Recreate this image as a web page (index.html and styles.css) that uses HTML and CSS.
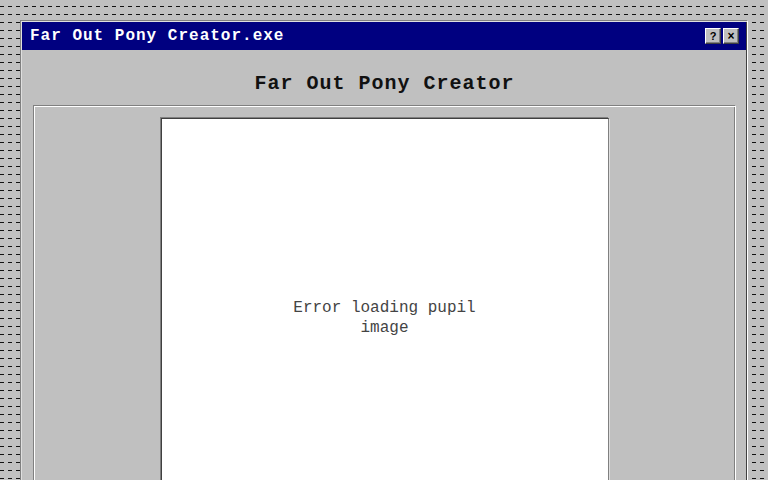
FILE: index.html
```html
<!DOCTYPE html>
<html lang="en">
<head>
    <meta charset="UTF-8">
    <meta name="viewport" content="width=device-width, initial-scale=1.0">
    <title>Far Out Pony Creator</title>
    <link rel="stylesheet" href="styles.css">
</head>
<body>
    <div class="window">
        <!-- Title bar -->
        <div class="title-bar">
            <span class="title-text">Far Out Pony Creator.exe</span>
            <div class="title-buttons">
                <button class="title-btn">?</button>
                <button class="title-btn close">&times;</button>
            </div>
        </div>

        <div class="window-body">
            <h1 class="app-heading">Far Out Pony Creator</h1>

            <div class="panel">
                <div class="pupil-frame">
                    <p class="pupil-error">Error loading pupil image</p>
                </div>
            </div>
        </div>
    </div>
</body>
</html>
```

FILE: styles.css
```css
/* General Styles */
html {
    overflow: hidden;
}

body {
    margin: 0;
    padding: 20px 20px 0;
    font-family: 'Courier New', 'Liberation Mono', monospace;
    background-color: #c0c0c0;
    background-image:
        linear-gradient(to right, transparent 4px, #c0c0c0 4px),
        linear-gradient(to bottom, #c0c0c0 6px, #111 6px, #111 7px, #c0c0c0 7px);
    background-size: 8px 8px;
}

/* Window */
.window {
    width: 728px;
    box-sizing: border-box;
    background: #c0c0c0;
    border: 1px solid;
    border-color: #808080 #fff #fff #808080;
    box-shadow: inset 1px 1px #dfdfdf, inset -1px -1px #404040;
    padding: 1px;
}

.title-bar {
    height: 28px;
    background: #000080;
    display: flex;
    align-items: center;
    justify-content: space-between;
    padding: 0 7px 0 8px;
}

.title-text {
    color: #fff;
    font-weight: bold;
    font-size: 16px;
    letter-spacing: 1px;
}

.title-buttons {
    display: flex;
    gap: 2px;
}

.title-btn {
    width: 16px;
    height: 16px;
    padding: 0;
    background: #c0c0c0;
    border: 1px solid;
    border-color: #fff #404040 #404040 #fff;
    box-shadow: inset -1px -1px #808080;
    font-family: 'Liberation Sans', Arial, sans-serif;
    font-size: 11px;
    font-weight: bold;
    line-height: 13px;
    color: #000;
}

.title-btn.close {
    font-size: 12px;
}

/* Body */
.window-body {
    padding: 22px 10px 0 11px;
}

.app-heading {
    margin: 0 0 9px;
    text-align: center;
    font-size: 20px;
    line-height: 24px;
    letter-spacing: 1px;
    color: #111;
}

.panel {
    border: 1px solid;
    border-color: #808080 #fff #fff #808080;
    box-shadow: inset 1px 1px #fff, inset -1px -1px #808080;
    padding: 12px 0 20px;
    display: flex;
    justify-content: center;
}

.pupil-frame {
    width: 448px;
    height: 400px;
    box-sizing: border-box;
    background: #fff;
    border: 1px solid;
    border-color: #404040 #808080 #808080 #404040;
    box-shadow: -1px -1px #808080, 1px 1px #dfdfdf;
    display: flex;
    align-items: center;
    justify-content: center;
}

.pupil-error {
    margin: 0;
    max-width: 200px;
    text-align: center;
    font-size: 16px;
    line-height: 20px;
    color: #444;
}
```
